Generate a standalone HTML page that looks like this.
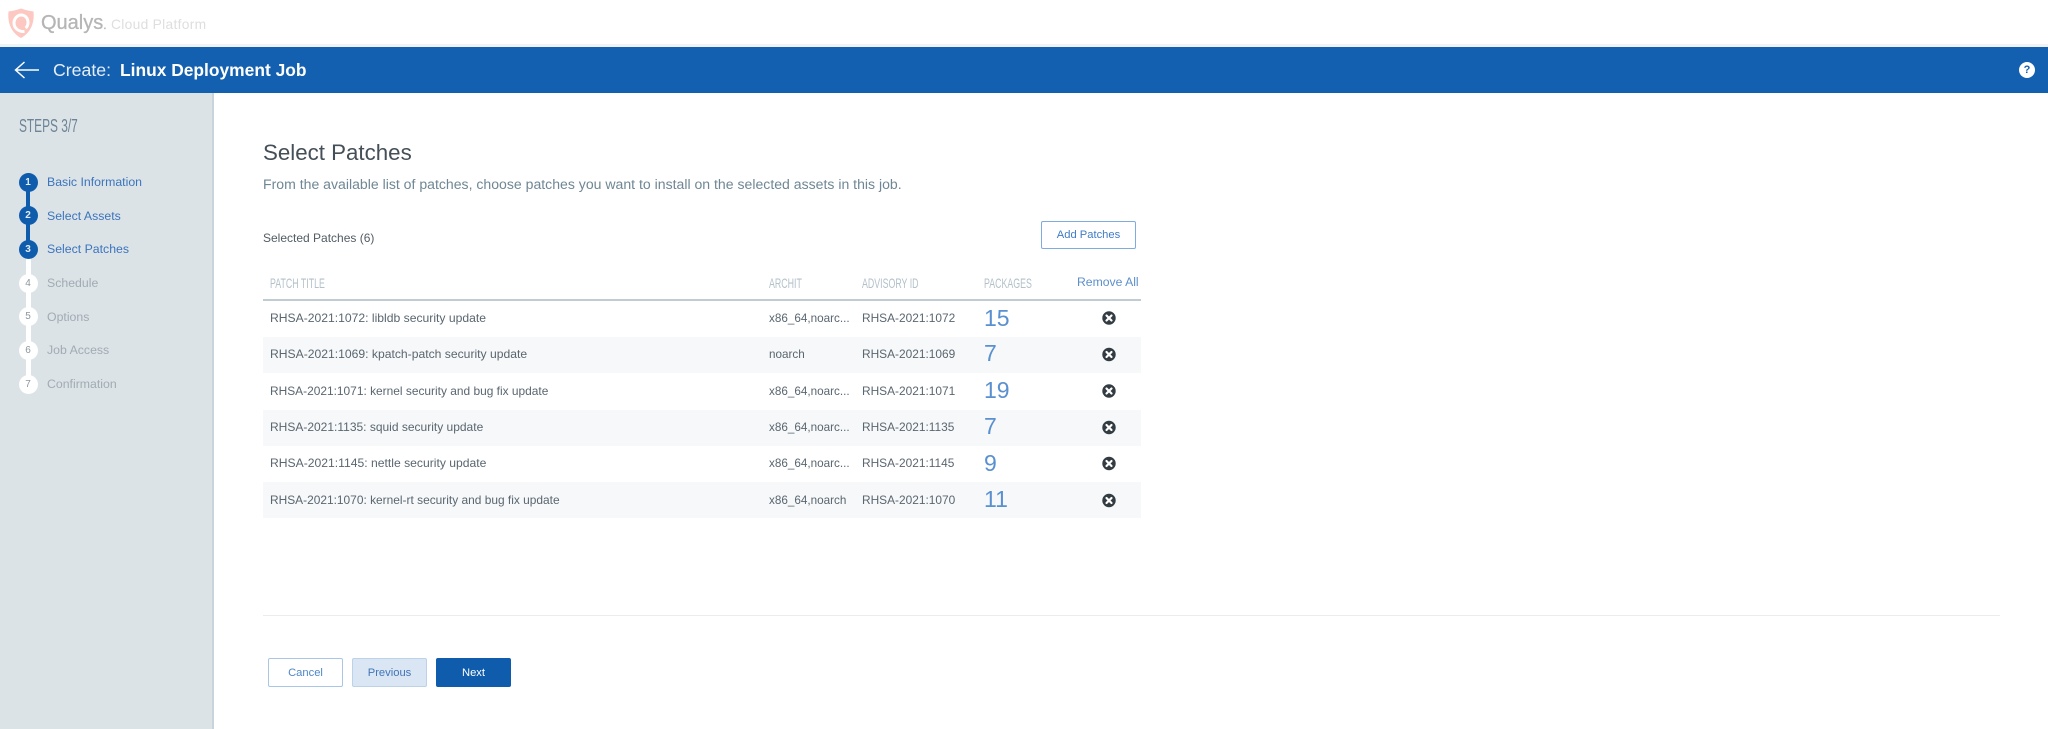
<!DOCTYPE html>
<html>
<head>
<meta charset="utf-8">
<style>
html,body{margin:0;padding:0;background:#fff}
body{width:2048px;height:729px;position:relative;overflow:hidden;font-family:"Liberation Sans",sans-serif}
.a{position:absolute;white-space:nowrap}
.t{line-height:16px;height:16px;transform:translateY(-8px)}
.cond{transform-origin:0 50%;transform:translateY(-8px) scaleX(.63)}
.row{position:absolute;left:263px;width:878px;height:36.4px}
.cell{font-size:12.15px;color:#5a6670}
.sm{font-size:11.93px}
.ar{font-size:11.7px;transform:translateY(-7px)}
.ad{font-size:11.9px}
.num{font-size:23px;color:#5a90d0;line-height:28px;transform:translateY(-14px)}
.hd{font-size:14px;color:#b3c1ca}
.step{font-size:12.3px}
.c{position:absolute;left:18.5px;width:19px;height:19px;border-radius:50%;text-align:center;font-size:10px;line-height:20px}
.on{background:#0f5cad;color:#e4edf6;font-weight:bold}
.off{background:#fff;color:#8d979e}
.btn{position:absolute;box-sizing:border-box;border-radius:2px;text-align:center;font-size:11.2px}
</style>
</head>
<body>
<!-- top bar -->
<svg class="a" style="left:7px;top:7px" width="28" height="32" viewBox="0 0 28 32">
<path d="M14 1.500C10 3 5 4 1.500 4.500C0.500 14 3 25 14 31C25 25 27.500 14 26.500 4.500C23 4 18 3 14 1.500Z" fill="#fcc8c1"/>
<path d="M17.500 24.500C12 25 7 21.500 7 16C7 11.500 10.500 8 14 8C18.500 8 21 11.500 21 15.500C21 18 20 20 18.500 21" fill="none" stroke="#fff" stroke-width="3"/>
</svg>
<div class="a" style="left:41px;top:24px;font-size:20px;line-height:20px;height:20px;transform:translateY(-11px);color:#b5b5b5;-webkit-text-stroke:.3px #b5b5b5">Qualys<span style="font-size:12px">.</span></div>
<div class="a t" style="left:111px;top:24.500px;font-size:13.800px;color:#dedede;letter-spacing:.3px">Cloud Platform</div>
<div class="a" style="left:0;top:44px;width:2048px;height:3px;background:#f1f2f3"></div>

<!-- blue header -->
<div class="a" style="left:0;top:47px;width:2048px;height:46px;background:#1460b0"></div>
<svg class="a" style="left:13px;top:58px" width="28" height="24" viewBox="0 0 28 24">
<path d="M26 12H2.500M11.500 4L2.500 12L11.500 20" fill="none" stroke="#fff" stroke-width="1.500"/>
</svg>
<div class="a" style="left:53px;top:70px;font-size:17.700px;line-height:24px;height:24px;transform:translateY(-12px);color:#e6eef7">Create:</div>
<div class="a" style="left:120px;top:70px;font-size:17.400px;font-weight:bold;line-height:24px;height:24px;transform:translateY(-12px);color:#fff">Linux Deployment Job</div>
<div class="a" style="left:2019px;top:62px;width:16px;height:16px;border-radius:50%;background:#fff;color:#1460b0;font-size:11px;font-weight:bold;line-height:16px;text-align:center">?</div>

<!-- sidebar -->
<div class="a" style="left:0;top:93px;width:212px;height:636px;background:#dce3e7;border-right:2px solid #c8d3da;box-sizing:content-box"></div>
<div class="a t cond" style="left:19px;top:126px;font-size:18px;transform:translateY(-8px) scaleX(.66);color:#6d8496">STEPS 3/7</div>

<div class="a" style="left:26px;top:182px;width:4px;height:68px;background:#0f5cad"></div>
<div class="a" style="left:25.500px;top:250px;width:5px;height:134px;background:#fff"></div>
<div class="c on" style="top:172.500px">1</div>
<div class="c on" style="top:206px">2</div>
<div class="c on" style="top:240px">3</div>
<div class="c off" style="top:273.500px">4</div>
<div class="c off" style="top:307px">5</div>
<div class="c off" style="top:341px">6</div>
<div class="c off" style="top:374.500px">7</div>
<div class="a t step" style="left:47px;top:182px;color:#3b74bd">Basic Information</div>
<div class="a t step" style="left:47px;top:215.500px;color:#3b74bd">Select Assets</div>
<div class="a t step" style="left:47px;top:249px;color:#3b74bd">Select Patches</div>
<div class="a t step" style="left:47px;top:283px;color:#a0abb3">Schedule</div>
<div class="a t step" style="left:47px;top:316.500px;color:#a0abb3">Options</div>
<div class="a t step" style="left:47px;top:350px;color:#a0abb3">Job Access</div>
<div class="a t step" style="left:47px;top:383.500px;color:#a0abb3">Confirmation</div>

<!-- main -->
<div class="a" style="left:263px;top:153px;font-size:22.300px;line-height:28px;transform:translateY(-14px);color:#444f57">Select Patches</div>
<div class="a t" style="left:263px;top:184px;font-size:14.070px;color:#6f8794">From the available list of patches, choose patches you want to install on the selected assets in this job.</div>
<div class="a t" style="left:263px;top:237.500px;font-size:12px;color:#525c63">Selected Patches (6)</div>
<div class="btn" style="left:1041px;top:221px;width:95px;height:28px;border:1px solid #80abdd;color:#3f7cc4;line-height:27px;background:#fff">Add Patches</div>

<div class="a t hd cond" style="left:270px;top:283px">PATCH TITLE</div>
<div class="a t hd cond" style="left:769px;top:283px">ARCHIT</div>
<div class="a t hd cond" style="left:862px;top:283px">ADVISORY ID</div>
<div class="a t hd cond" style="left:984px;top:283px">PACKAGES</div>
<div class="a t" style="left:1077px;top:282px;font-size:12.200px;color:#5d8fcb">Remove All</div>
<div class="a" style="left:263px;top:299px;width:878px;height:2px;background:#c0ccd4"></div>

<div class="row" style="top:337px;background:#f6f8f9"></div>
<div class="row" style="top:409.500px;background:#f6f8f9"></div>
<div class="row" style="top:482px;background:#f6f8f9"></div>

<div class="a t cell" style="left:270px;top:318px">RHSA-2021:1072: libldb security update</div>
<div class="a t cell ar" style="left:769px;top:318px">x86_64,noarc...</div>
<div class="a t cell ad" style="left:862px;top:318px">RHSA-2021:1072</div>
<div class="a num" style="left:984px;top:317.500px">15</div>

<div class="a t cell" style="left:270px;top:354px">RHSA-2021:1069: kpatch-patch security update</div>
<div class="a t cell ar" style="left:769px;top:354px">noarch</div>
<div class="a t cell ad" style="left:862px;top:354px">RHSA-2021:1069</div>
<div class="a num" style="left:984px;top:353px">7</div>

<div class="a t cell sm" style="left:270px;top:390.500px">RHSA-2021:1071: kernel security and bug fix update</div>
<div class="a t cell ar" style="left:769px;top:390.500px">x86_64,noarc...</div>
<div class="a t cell ad" style="left:862px;top:390.500px">RHSA-2021:1071</div>
<div class="a num" style="left:984px;top:390px">19</div>

<div class="a t cell" style="left:270px;top:427px;font-size:12px">RHSA-2021:1135: squid security update</div>
<div class="a t cell ar" style="left:769px;top:427px">x86_64,noarc...</div>
<div class="a t cell ad" style="left:862px;top:427px">RHSA-2021:1135</div>
<div class="a num" style="left:984px;top:426px">7</div>

<div class="a t cell" style="left:270px;top:463px">RHSA-2021:1145: nettle security update</div>
<div class="a t cell ar" style="left:769px;top:463px">x86_64,noarc...</div>
<div class="a t cell ad" style="left:862px;top:463px">RHSA-2021:1145</div>
<div class="a num" style="left:984px;top:462.500px">9</div>

<div class="a t cell sm" style="left:270px;top:499.500px">RHSA-2021:1070: kernel-rt security and bug fix update</div>
<div class="a t cell ar" style="left:769px;top:499.500px">x86_64,noarch</div>
<div class="a t cell ad" style="left:862px;top:499.500px">RHSA-2021:1070</div>
<div class="a num" style="left:984px;top:499px">11</div>

<svg class="a" style="left:0;top:0" width="2048" height="729" viewBox="0 0 2048 729">
<g stroke="#fff" stroke-width="2.200" stroke-linecap="round">
<circle cx="1109" cy="318" r="6.700" fill="#333c42" stroke="none"/><path d="M1106.500 315.500l5 5m0-5l-5 5"/>
<circle cx="1109" cy="354.500" r="6.700" fill="#333c42" stroke="none"/><path d="M1106.500 352l5 5m0-5l-5 5"/>
<circle cx="1109" cy="391" r="6.700" fill="#333c42" stroke="none"/><path d="M1106.500 388.500l5 5m0-5l-5 5"/>
<circle cx="1109" cy="427.500" r="6.700" fill="#333c42" stroke="none"/><path d="M1106.500 425l5 5m0-5l-5 5"/>
<circle cx="1109" cy="463.500" r="6.700" fill="#333c42" stroke="none"/><path d="M1106.500 461l5 5m0-5l-5 5"/>
<circle cx="1109" cy="500.500" r="6.700" fill="#333c42" stroke="none"/><path d="M1106.500 498l5 5m0-5l-5 5"/>
</g>
</svg>

<div class="a" style="left:263px;top:615px;width:1737px;height:1px;background:#ececec"></div>

<div class="btn" style="left:268px;top:658px;width:75px;height:29px;border:1px solid #a9c6e6;color:#4f86c6;line-height:28px;background:#fff">Cancel</div>
<div class="btn" style="left:352px;top:658px;width:75px;height:29px;border:1px solid #bcd2e9;color:#4175b8;line-height:28px;background:#dae6f3">Previous</div>
<div class="btn" style="left:436px;top:658px;width:75px;height:29px;color:#fff;line-height:30px;background:#0f5cad">Next</div>
</body>
</html>
